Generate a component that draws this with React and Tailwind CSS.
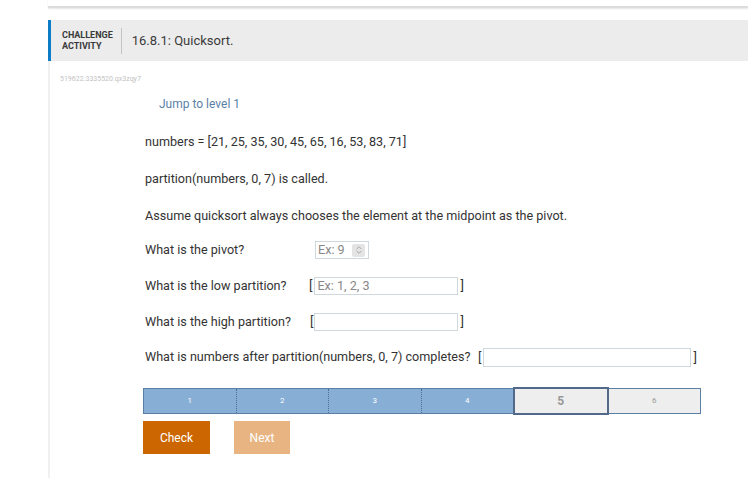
import { ChevronsUpDown } from 'lucide-react';

const levels = [1, 2, 3, 4, 5, 6];

const Bracket = ({ children }) => <span className="text-[13px] text-[#333]">{children}</span>;

const ProgressBar = ({ current }) => (
  <div className="flex h-[26px] w-[558px] border border-[#5a7ea6] bg-[#eeeeee]">
    {levels.map((n) => {
      const done = n < current;
      const active = n === current;
      return (
        <div
          key={n}
          className={`flex flex-1 items-center justify-center ${
            done ? 'bg-[#87aed5] text-white text-[8px]' : 'text-[#999] text-[8px]'
          } ${n < current - 1 ? 'border-r border-dotted border-[#4e6f94]' : ''} ${
            active ? '-my-[2px] border-2 border-[#52698a] text-[12px] font-bold text-[#666]' : ''
          }`}
        >
          {n}
        </div>
      );
    })}
  </div>
);

const App = () => {
  return (
    <div className="relative h-[478px] w-[748px] overflow-hidden bg-white font-['Roboto',sans-serif] text-[#333]">
      <div className="ml-[48px] h-[8px] border-b-2 border-[#dcdcdc] bg-white shadow-[0_1px_2px_rgba(0,0,0,0.1)]" />
      <div className="ml-[48px] mt-[12px] flex h-[470px] flex-col border-l-2 border-[#f0f0f0]">
        <div className="-ml-[2px] flex h-[41px] items-center border-l-[3px] border-[#0b7cc5] bg-[#ececec]">
          <div className="pl-[11px] pr-[8px] text-[9px] font-bold leading-[11px] text-[#3a3a3a]">
            CHALLENGE
            <br />
            ACTIVITY
          </div>
          <div className="h-[26px] w-px bg-[#c4c4c4]" />
          <div className="pl-[10px] text-[13px] text-[#3a3a3a]">16.8.1: Quicksort.</div>
        </div>
        <div className="pl-[10px] pt-[13px] text-[7px] text-[#c2c2c2]">519622.3335520.qx3zqy7</div>
        <div className="pl-[109px] pt-[10px] text-[12px] text-[#5b7fa8]">Jump to level 1</div>
        <div className="flex flex-col pl-[95px] text-[12.6px] text-[#333]">
          <div className="mt-[20px]">numbers = [21, 25, 35, 30, 45, 65, 16, 53, 83, 71]</div>
          <div className="mt-[19px]">partition(numbers, 0, 7) is called.</div>
          <div className="mt-[18px]">Assume quicksort always chooses the element at the midpoint as the pivot.</div>

          <div className="mt-[15px] flex h-[18px] items-center">
            <span className="w-[170px]">What is the pivot?</span>
            <div className="flex h-[18px] w-[54px] items-center justify-between border border-[#cfd8dc] pl-[2px] pr-[3px]">
              <span className="text-[#888]">Ex: 9</span>
              <span className="flex h-[13px] w-[13px] items-center justify-center rounded-[2px] bg-[#e4e4e4]">
                <ChevronsUpDown size={10} color="#999" strokeWidth={2} />
              </span>
            </div>
          </div>

          <div className="mt-[18px] flex h-[18px] items-center">
            <span className="w-[164px]">What is the low partition?</span>
            <Bracket>[</Bracket>
            <div className="ml-[2px] flex h-[18px] w-[144px] items-center border border-[#cfd8dc] pl-[2px] text-[#888]">
              Ex: 1, 2, 3
            </div>
            <span className="ml-[2px]">
              <Bracket>]</Bracket>
            </span>
          </div>

          <div className="mt-[18px] flex h-[18px] items-center">
            <span className="w-[165px]">What is the high partition?</span>
            <Bracket>[</Bracket>
            <div className="ml-[1px] h-[18px] w-[144px] border border-[#cfd8dc]" />
            <span className="ml-[2px]">
              <Bracket>]</Bracket>
            </span>
          </div>

          <div className="mt-[17px] flex h-[19px] items-center">
            <span className="w-[333px]">What is numbers after partition(numbers, 0, 7) completes?</span>
            <Bracket>[</Bracket>
            <div className="ml-[2px] h-[19px] w-[208px] border border-[#cfd8dc]" />
            <span className="ml-[2px]">
              <Bracket>]</Bracket>
            </span>
          </div>

          <div className="-ml-[2px] mt-[21px]">
            <ProgressBar current={5} />
          </div>

          <div className="-ml-[2px] mt-[7px] flex gap-[24px]">
            <button className="h-[33px] w-[67px] bg-[#cc6600] text-[12px] text-white">Check</button>
            <button className="h-[33px] w-[56px] bg-[#e8b482] text-[12px] text-white">Next</button>
          </div>
        </div>
      </div>
    </div>
  );
};

export default App;
